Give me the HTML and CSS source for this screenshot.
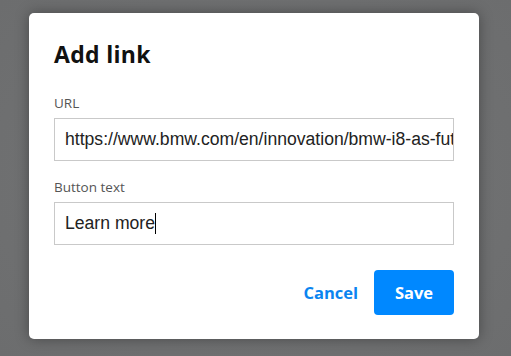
FILE: index.html
```html
<!DOCTYPE html>
<html>
<head>
<meta charset="utf-8">
<link rel="stylesheet" href="styles.css">
</head>
<body>
<div class="overlay">
  <div class="dialog">
    <h1 class="title">Add link</h1>
    <label class="label">URL</label>
    <div class="field"><span class="field-text">https://www.bmw.com/en/innovation/bmw-i8-as-futuristic-design-concept.html</span></div>
    <label class="label label-second">Button text</label>
    <div class="field"><span class="field-text">Learn more</span><span class="caret"></span></div>
    <div class="actions">
      <button class="btn btn-link">Cancel</button>
      <button class="btn btn-primary">Save</button>
    </div>
  </div>
</div>
</body>
</html>
```

FILE: styles.css
```css
html, body {
  margin: 0;
  padding: 0;
  width: 511px;
  height: 356px;
  overflow: hidden;
}
body {
  font-family: "Open Sans", "Noto Sans", sans-serif;
  background: #707172;
}
.overlay {
  width: 511px;
  height: 356px;
  padding: 13px 32px 17px 29px;
  box-sizing: border-box;
  background: radial-gradient(ellipse at center, #7a7b7c 0%, #6f7071 60%, #6c6d6e 100%);
}
.dialog {
  width: 450px;
  height: 326px;
  box-sizing: border-box;
  background: #fff;
  border-radius: 5px;
  padding: 25px 25px 0 25px;
  box-shadow: 0 0 14px rgba(0,0,0,0.35);
  display: flex;
  flex-direction: column;
}
.title {
  margin: 0;
  font-size: 23px;
  font-weight: 700;
  line-height: 32px;
  color: #111;
  letter-spacing: 0.3px;
}
.label {
  display: block;
  margin-top: 24px;
  font-size: 13.5px;
  line-height: 18px;
  color: #555;
  margin-bottom: 6px;
}
.label-second {
  margin-top: 17px;
}
.field {
  height: 43px;
  box-sizing: border-box;
  border: 1px solid #c9c9c9;
  padding: 0 10px;
  display: flex;
  align-items: center;
  overflow: hidden;
  white-space: nowrap;
  font-family: "Liberation Sans", Arial, sans-serif;
  font-size: 17.6px;
  color: #222;
}
.caret {
  display: inline-block;
  width: 1px;
  height: 21px;
  background: #000;
  flex: none;
}
.actions {
  display: flex;
  justify-content: flex-end;
  align-items: center;
  gap: 16px;
  margin-top: 25px;
}
.btn {
  font-family: "Open Sans", "Noto Sans", sans-serif;
  font-size: 16.5px;
  font-weight: 700;
  border: none;
  cursor: pointer;
}
.btn-link {
  background: none;
  color: #0a84f0;
  padding: 0;
}
.btn-primary {
  width: 80px;
  height: 45px;
  background: #0088ff;
  color: #fff;
  border-radius: 4px;
}
```
